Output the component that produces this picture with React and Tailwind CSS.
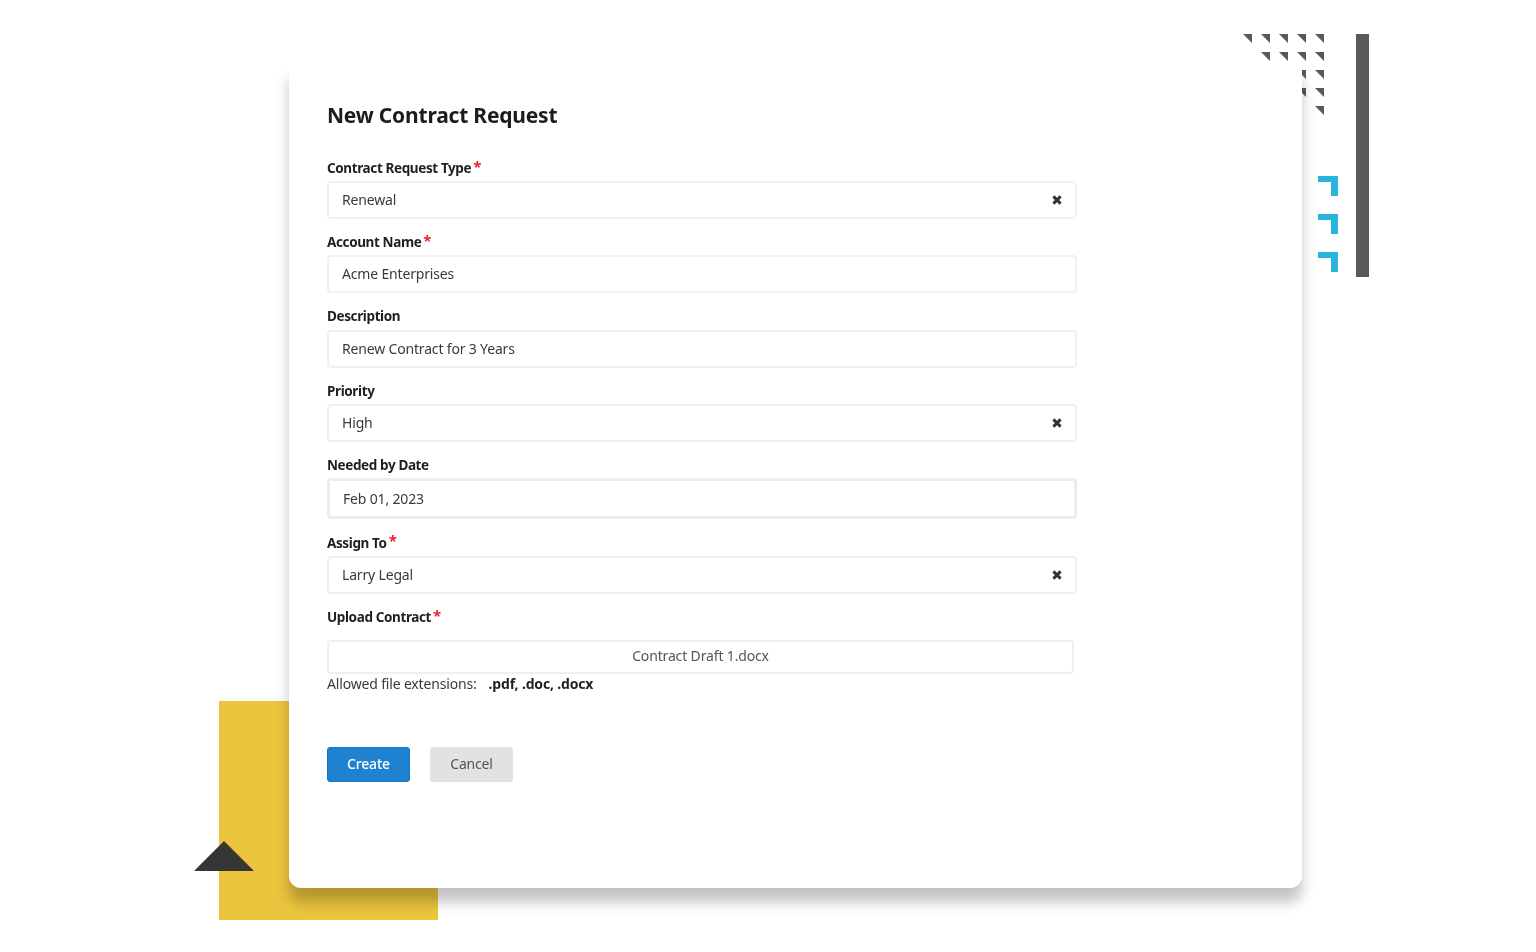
import React from "react";

const FONT = { fontFamily: '"Noto Sans", "Open Sans", sans-serif' };

function Req() {
  return <span className="ml-[2px] relative -top-[2px] text-[15px] leading-none font-bold text-[#e8222e]">*</span>;
}

function Label({ children, req, className = "" }) {
  return (
    <div className={`h-[20px] flex items-center text-[13.5px] tracking-[-0.38px] leading-[20px] font-bold text-[#1f1f1f] ${className}`}>
      {children}
      {req && <Req />}
    </div>
  );
}

function Clear() {
  return (
    <svg width="10" height="10" viewBox="0 0 10 10" className="shrink-0">
      <path d="M1.4 1.4 L8.6 8.6 M8.6 1.4 L1.4 8.6" stroke="#333" strokeWidth="2.9" strokeLinecap="butt" />
    </svg>
  );
}

function Field({ value, clear, className, textClass = "pb-[2px]" }) {
  return (
    <div className={`w-[750px] flex items-center justify-between pr-[13px] rounded-[4px] bg-white text-[14px] tracking-[-0.17px] text-[#3a3a3a] ${className}`}>
      <span className={textClass}>{value}</span>
      {clear && <Clear />}
    </div>
  );
}

const ROWS = [
  [1243, 34], [1261, 34], [1279, 34], [1297, 34], [1315, 34],
  [1261, 52], [1279, 52], [1297, 52], [1315, 52],
  [1297, 70], [1315, 70],
  [1297, 88], [1315, 88],
  [1315, 106],
];

function Decorations() {
  return (
    <>
      <div className="absolute left-[1356px] top-[34px] w-[13px] h-[243px] bg-[#595959]" />
      <svg className="absolute left-[1240px] top-[30px]" width="90" height="90" viewBox="1240 30 90 90">
        {ROWS.map(([x, y]) => (
          <polygon key={`${x}-${y}`} points={`${x},${y} ${x + 9},${y} ${x + 9},${y + 9}`} fill="#595959" />
        ))}
      </svg>
      <svg className="absolute left-[1316px] top-[174px]" width="24" height="100" viewBox="1316 174 24 100">
        {[176, 214, 252].map((y) => (
          <path key={y} d={`M1318 ${y} H1338 V${y + 20} H1331 V${y + 6} H1318 Z`} fill="#29b4dd" />
        ))}
      </svg>
      <div className="absolute left-[219px] top-[701px] w-[218.5px] h-[218.5px] bg-[#ebc53e]" />
    </>
  );
}

const INPUT = "h-[38px] border-2 border-[#f0f0f0] pl-[13px]";

export default function App() {
  return (
    <div className="relative w-[1536px] h-[952px] bg-white overflow-hidden blur-[0.35px]" style={FONT}>
      <Decorations />
      <div className="relative ml-[289px] pt-[65px]">
        <div className="w-[1013px] h-[823px] bg-white rounded-b-[12px] shadow-[0_14px_14px_rgba(0,0,0,0.24)] pl-[38px] pt-[35px]">
          <h1 className="text-[21px] tracking-[-0.2px] leading-[30px] font-bold text-[#1c1c1c]">New Contract Request</h1>

          <Label req className="mt-[28px]">Contract Request Type</Label>
          <Field value="Renewal" clear className={`mt-[3px] ${INPUT}`} />

          <Label req className="mt-[13px]">Account Name</Label>
          <Field value="Acme Enterprises" className={`mt-[3.33px] ${INPUT}`} />

          <Label className="mt-[13px]">Description</Label>
          <Field value="Renew Contract for 3 Years" textClass="pb-[1px]" className={`mt-[3.33px] ${INPUT}`} />

          <Label className="mt-[13px]">Priority</Label>
          <Field value="High" clear textClass="pb-[1px]" className={`mt-[3.33px] ${INPUT}`} />

          <Label className="mt-[13px]">Needed by Date</Label>
          <Field value="Feb 01, 2023" textClass="pb-[1px]" className="mt-[3.33px] h-[41px] border-[3px] border-[#ececec] pl-[13px]" />

          <Label req className="mt-[13.5px]">Assign To</Label>
          <Field value="Larry Legal" clear className={`mt-[3.5px] ${INPUT}`} />

          <Label req className="mt-[13px]">Upload Contract</Label>
          <div className="mt-[12.5px] w-[747px] h-[34px] flex items-center justify-center rounded-[4px] border-2 border-[#efefef] text-[14px] tracking-[-0.15px] text-[#555]">
            <span className="pb-[2px]">Contract Draft 1.docx</span>
          </div>
          <div className="h-[20px] flex items-center text-[14px] tracking-[-0.17px] text-[#3a3a3a]">
            <span>Allowed file extensions:</span>
            <span className="ml-[12px] font-bold text-[#1f1f1f]">.pdf, .doc, .docx</span>
          </div>

          <div className="mt-[53px] flex gap-[20px]">
            <button className="w-[83px] h-[35px] pb-[2px] rounded-[3px] border border-[#1a78c2] bg-[#1e82d0] text-white text-[14px] tracking-[-0.17px] font-medium">Create</button>
            <button className="w-[83px] h-[35px] pb-[2px] rounded-[3px] bg-[#e1e2e4] text-[#555] text-[14px] tracking-[-0.17px]">Cancel</button>
          </div>
        </div>
      </div>
      <svg className="absolute left-[194px] top-[841px]" width="60" height="30" viewBox="0 0 60 30">
        <polygon points="30,0 60,30 0,30" fill="#363636" />
      </svg>
    </div>
  );
}
